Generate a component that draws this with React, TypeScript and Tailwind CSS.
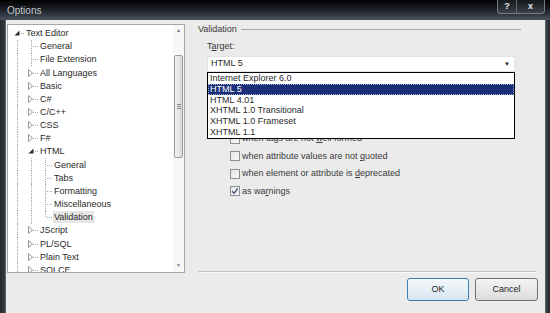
import React from "react";

type Node = {
  label: string;
  level: number;
  icon?: "open" | "closed";
  last?: boolean;
  selected?: boolean;
};

const tree: Node[] = [
  { label: "Text Editor", level: 0, icon: "open" },
  { label: "General", level: 1 },
  { label: "File Extension", level: 1 },
  { label: "All Languages", level: 1, icon: "closed" },
  { label: "Basic", level: 1, icon: "closed" },
  { label: "C#", level: 1, icon: "closed" },
  { label: "C/C++", level: 1, icon: "closed" },
  { label: "CSS", level: 1, icon: "closed" },
  { label: "F#", level: 1, icon: "closed" },
  { label: "HTML", level: 1, icon: "open" },
  { label: "General", level: 2 },
  { label: "Tabs", level: 2 },
  { label: "Formatting", level: 2 },
  { label: "Miscellaneous", level: 2 },
  { label: "Validation", level: 2, last: true, selected: true },
  { label: "JScript", level: 1, icon: "closed" },
  { label: "PL/SQL", level: 1, icon: "closed" },
  { label: "Plain Text", level: 1, icon: "closed" },
  { label: "SOLCE", level: 1, icon: "closed" },
];

const targets = [
  "Internet Explorer 6.0",
  "HTML 5",
  "HTML 4.01",
  "XHTML 1.0 Transitional",
  "XHTML 1.0 Frameset",
  "XHTML 1.1",
];

function Glyph({ open }: { open: boolean }) {
  return open ? (
    <svg width="6" height="6" viewBox="0 0 6 6">
      <polygon points="5.5,0.5 5.5,5.5 0.5,5.5" fill="#2c2c2c" />
    </svg>
  ) : (
    <svg width="5" height="8" viewBox="0 0 5 8">
      <polygon points="0.5,0.5 4.5,4 0.5,7.5" fill="#fff" stroke="#8c8c8c" strokeWidth="0.9" />
    </svg>
  );
}

function TreeRow({ node, index }: { node: Node; index: number }) {
  const cells = [];
  for (let j = 0; j <= node.level; j++) {
    const own = j === node.level;
    cells.push(
      <div key={j} className="relative w-[14px] h-full shrink-0">
        {/* guide lines of the parents */}
        {!own && index > 0 && (
          <div className="absolute left-[7px] top-0 bottom-0 border-l border-dotted border-[#a8a8a8]" />
        )}
        {own && !node.icon && (
          <div
            className={`absolute left-[7px] top-0 border-l border-dotted border-[#a8a8a8] ${
              node.last ? "h-1/2" : "bottom-0"
            }`}
          />
        )}
        {own && node.level === 0 && (
          <div className="absolute left-[7px] top-1/2 bottom-0 border-l border-dotted border-[#a8a8a8]" />
        )}
        {own && (
          <div className="absolute left-[9px] right-0 top-1/2 border-t border-dotted border-[#a8a8a8]" />
        )}
        {own && node.icon && (
          <div className="absolute left-[4px] top-0 bottom-0 flex items-center bg-white">
            <Glyph open={node.icon === "open"} />
          </div>
        )}
      </div>
    );
  }
  return (
    <div className="flex items-center h-[13.17px]">
      {cells}
      <span
        className={`ml-[1px] px-[1px] leading-[12px] whitespace-nowrap ${
          node.selected ? "bg-[#e6e6e6]" : ""
        }`}
      >
        {node.label}
      </span>
    </div>
  );
}

function Checkbox({ checked, children }: { checked?: boolean; children: React.ReactNode }) {
  return (
    <div className="flex items-center h-[17.5px] pl-[32px]">
      <div className="w-[10px] h-[10px] border border-[#8e8f8f] bg-gradient-to-br from-[#e4e4e4] to-[#f8f8f8] flex items-center justify-center">
        {checked && (
          <svg width="8" height="8" viewBox="0 0 8 8">
            <path d="M1.2 4.2 L3.1 6.3 L6.8 1.4" fill="none" stroke="#3b4a6b" strokeWidth="1.3" />
          </svg>
        )}
      </div>
      <span className="ml-[2px] text-[#3a3a3a]">{children}</span>
    </div>
  );
}

export default function App() {
  return (
    <div className="w-[550px] h-[313px] flex flex-col overflow-hidden font-['Liberation_Sans',Arial,sans-serif] text-[9px] text-[#2a2a2a] bg-[#24272c]">
      {/* title bar */}
      <div className="h-[20px] shrink-0 flex items-start justify-between bg-gradient-to-b from-[#030303] via-[#1e2228] to-[#4a525d]">
        <span className="pl-[7px] pt-[5px] text-[10px] text-[#c4c8ce] leading-[11px]">Options</span>
        <div className="mr-[5px] flex h-[14px] w-[48px] rounded-b-[4px] border border-t-0 border-[#767c84] bg-gradient-to-b from-[#15181c] to-[#3c424a] text-[#e8e8e8] font-bold text-[9px]">
          <div className="w-[19px] flex items-center justify-center border-r border-[#626870]">?</div>
          <div className="flex-1 flex items-center justify-center">x</div>
        </div>
      </div>

      <div className="flex flex-1 min-h-0">
        <div className="w-[6px] shrink-0 bg-gradient-to-r from-[#25282d] to-[#383c43] border-r border-[#5c6168]" />

        {/* client area */}
        <div className="flex-1 flex flex-col bg-[#ebebeb]">
          <div className="flex h-[249px] mt-[4px]">
            {/* tree view */}
            <div className="ml-[1px] w-[178px] h-full border border-[#a5a5a5] bg-white flex overflow-hidden">
              <div className="flex-1 pl-[2px] pt-[1.5px] overflow-hidden">
                {tree.map((n, i) => (
                  <TreeRow key={i} node={n} index={i} />
                ))}
              </div>
              <div className="w-[11px] flex flex-col items-center bg-[#f7f7f7]">
                <div className="h-[12px] flex items-center justify-center text-[5px] text-[#7a7a7a]">▲</div>
                <div className="mt-[18px] h-[103px] w-[9px] rounded-[2px] border border-[#9a9a9a] bg-gradient-to-r from-[#f2f2f2] to-[#d9d9d9] flex flex-col items-center justify-center gap-[1px]">
                  <div className="w-[4px] border-t border-[#8a8a8a]" />
                  <div className="w-[4px] border-t border-[#8a8a8a]" />
                  <div className="w-[4px] border-t border-[#8a8a8a]" />
                </div>
                <div className="mt-auto h-[12px] flex items-center justify-center text-[5px] text-[#7a7a7a]">▼</div>
              </div>
            </div>

            {/* right pane */}
            <div className="ml-[13px] mr-[9px] flex-1 flex flex-col">
              <div className="h-[11px] flex items-center">
                <span className="text-[#3a3a3a]">Validation</span>
                <div className="ml-[4px] w-[280px] border-t border-[#a8a8a8]" />
              </div>
              <div className="mt-[6px] ml-[9px] h-[12px] flex items-center text-[#3a3a3a]">
                <span>
                  T<span className="underline">a</span>rget:
                </span>
              </div>
              <div className="relative mt-[3px] ml-[9px] w-[308px] h-[16px] bg-white border border-[#e2e2e2] flex items-center pl-[3px]">
                <span>HTML 5</span>
                <span className="ml-auto mr-[4px] text-[6px] text-[#222]">▼</span>
                {/* open dropdown list */}
                <div className="absolute left-[-1px] top-[15px] w-[308px] h-[67px] border border-black bg-white z-20">
                  {targets.map((t) => (
                    <div
                      key={t}
                      className={`h-[10.8px] leading-[10.8px] pl-[2px] whitespace-nowrap ${
                        t === "HTML 5"
                          ? "bg-[#1a2f78] text-white outline-dotted outline-1 -outline-offset-1 outline-[#9fb0d8]"
                          : ""
                      }`}
                    >
                      {t}
                    </div>
                  ))}
                </div>
              </div>
              <div className="mt-[58px]">
                <Checkbox>
                  when tags are not <span className="underline">w</span>ell formed
                </Checkbox>
                <Checkbox>
                  when attribute values are not <span className="underline">q</span>uoted
                </Checkbox>
                <Checkbox>
                  when element or attribute is <span className="underline">d</span>eprecated
                </Checkbox>
                <Checkbox checked>
                  as wa<span className="underline">r</span>nings
                </Checkbox>
              </div>
              <div className="mt-auto border-t border-[#c4c4c4] border-b border-b-[#fafafa]" />
            </div>
          </div>

          {/* buttons */}
          <div className="mt-[5px] flex justify-end gap-[6px] pr-[7px]">
            <button className="w-[62px] h-[23px] rounded-[3px] border border-[#3c7fb1] bg-gradient-to-b from-[#f4f9fc] to-[#d8e6f0] text-[9px] text-[#1e1e1e]">
              OK
            </button>
            <button className="w-[63px] h-[23px] rounded-[3px] border border-[#707070] bg-gradient-to-b from-[#f4f4f4] to-[#dcdcdc] text-[9px] text-[#1e1e1e]">
              Cancel
            </button>
          </div>
        </div>

        <div className="w-[5px] shrink-0 bg-gradient-to-r from-[#3c4148] to-[#24272c] border-l border-[#5c6168]" />
      </div>
    </div>
  );
}
